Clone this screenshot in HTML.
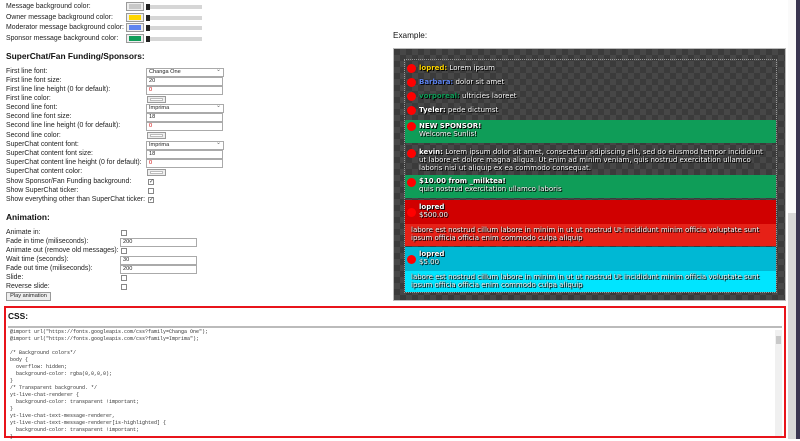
<!DOCTYPE html>
<html><head><style>
*{margin:0;padding:0;box-sizing:border-box}
body{width:800px;height:439px;overflow:hidden;background:#fff;font-family:"Liberation Sans",Arial,sans-serif;font-size:6.9px;color:#222;position:relative}
.a{position:absolute;white-space:nowrap}
.h{font-weight:bold;font-size:8.4px;color:#111}
.sw{position:absolute;width:18px;height:9px;border:1px solid #999;background:#eee;padding:1px 2px}
.sw i{display:block;width:100%;height:100%}
.sl{position:absolute;width:56px;height:4px;background:#d6d6d6}
.sl b{position:absolute;left:0;top:-1px;width:4px;height:6px;background:#222}
.sel,.txt{position:absolute;height:8.5px;border:1px solid #aaa;background:#fff;font-size:5.6px;padding-left:2px;line-height:7px}
.sel{width:78px}
.sel:after{content:"⌄";position:absolute;right:2px;top:-2px;font-size:6px;color:#666}
.txt{width:77px}
.col{position:absolute;width:19px;height:7px;border:1px solid #999;background:#eee;padding:1px 2px}
.col i{display:block;width:100%;height:100%;background:#fff;border:1px solid #bbb}
.cb{position:absolute;width:6px;height:6px;border:1px solid #888;background:#fff;font-size:6px;line-height:5px;text-align:center;color:#444}
.ex{position:absolute;left:393px;top:48px;width:393px;height:253px;background-color:#3b3b3b;background-image:linear-gradient(45deg,#474747 25%,transparent 25%,transparent 75%,#474747 75%),linear-gradient(45deg,#474747 25%,transparent 25%,transparent 75%,#474747 75%);background-size:12px 12px;background-position:0 0,6px 6px;border:1px solid #bbb}
.in{position:absolute;left:10px;top:10px;width:373px;height:234px;border:1px dotted #999}
.m{position:absolute;left:0;right:0;font-family:"DejaVu Sans",sans-serif;font-size:7px;color:#fff;text-shadow:0 0 1px #000,1px 1px 0 #000}
.dot{position:absolute;left:2px;width:9px;height:9px;border-radius:50%;background:#f00}
.m .t{position:absolute;left:14px}
.n{font-weight:bold}
.css{position:absolute;left:4px;top:306px;width:782px;height:132px;border:2px solid #e8141b}
.code{position:absolute;left:2px;top:18px;right:2px;bottom:0;border-top:2px solid #bbb;font-family:"Liberation Mono",monospace;font-size:5px;line-height:7px;padding:1px 2px;white-space:pre;color:#333}
.sb{position:absolute;right:0;top:2px;width:7px;bottom:0;background:#f0f0f0}
</style></head><body>
<div class="a" style="left:6px;top:3px">Message background color:</div>
<div class="a" style="left:6px;top:14px">Owner message background color:</div>
<div class="a" style="left:6px;top:24px">Moderator message background color:</div>
<div class="a" style="left:6px;top:35px">Sponsor message background color:</div>
<div class="sw" style="left:126px;top:2px"><i style="background:#c8c8c8"></i></div>
<div class="sw" style="left:126px;top:13px"><i style="background:#ffd600"></i></div>
<div class="sw" style="left:126px;top:23px"><i style="background:#5e84f1"></i></div>
<div class="sw" style="left:126px;top:34px"><i style="background:#0f9d58"></i></div>
<div class="sl" style="left:146px;top:5px"><b></b></div>
<div class="sl" style="left:146px;top:16px"><b></b></div>
<div class="sl" style="left:146px;top:26px"><b></b></div>
<div class="sl" style="left:146px;top:37px"><b></b></div>

<div class="a h" style="left:6px;top:51px">SuperChat/Fan Funding/Sponsors:</div>
<div class="a" style="left:6px;top:68px">First line font:</div>
<div class="a" style="left:6px;top:77px">First line font size:</div>
<div class="a" style="left:6px;top:86px">First line line height (0 for default):</div>
<div class="a" style="left:6px;top:95px">First line color:</div>
<div class="a" style="left:6px;top:104px">Second line font:</div>
<div class="a" style="left:6px;top:113px">Second line font size:</div>
<div class="a" style="left:6px;top:122px">Second line line height (0 for default):</div>
<div class="a" style="left:6px;top:132px">Second line color:</div>
<div class="a" style="left:6px;top:141px">SuperChat content font:</div>
<div class="a" style="left:6px;top:150px">SuperChat content font size:</div>
<div class="a" style="left:6px;top:159px">SuperChat content line height (0 for default):</div>
<div class="a" style="left:6px;top:168px">SuperChat content color:</div>
<div class="a" style="left:6px;top:178px">Show Sponsor/Fan Funding background:</div>
<div class="a" style="left:6px;top:187px">Show SuperChat ticker:</div>
<div class="a" style="left:6px;top:196px">Show everything other than SuperChat ticker:</div>
<div class="sel" style="left:146px;top:68px">Changa One</div>
<div class="txt" style="left:146px;top:77px">20</div>
<div class="txt" style="left:146px;top:86px;color:#c00">0</div>
<div class="col" style="left:147px;top:96px"><i></i></div>
<div class="sel" style="left:146px;top:104px">Imprima</div>
<div class="txt" style="left:146px;top:113px">18</div>
<div class="txt" style="left:146px;top:122px;color:#c00">0</div>
<div class="col" style="left:147px;top:132px"><i></i></div>
<div class="sel" style="left:146px;top:141px">Imprima</div>
<div class="txt" style="left:146px;top:150px">18</div>
<div class="txt" style="left:146px;top:159px;color:#c00">0</div>
<div class="col" style="left:147px;top:169px"><i></i></div>
<div class="cb" style="left:148px;top:179px">✓</div>
<div class="cb" style="left:148px;top:188px"></div>
<div class="cb" style="left:148px;top:197px">✓</div>

<div class="a h" style="left:6px;top:212px">Animation:</div>
<div class="a" style="left:6px;top:229px">Animate in:</div>
<div class="a" style="left:6px;top:238px">Fade in time (miliseconds):</div>
<div class="a" style="left:6px;top:247px">Animate out (remove old messages):</div>
<div class="a" style="left:6px;top:256px">Wait time (seconds):</div>
<div class="a" style="left:6px;top:265px">Fade out time (miliseconds):</div>
<div class="a" style="left:6px;top:274px">Slide:</div>
<div class="a" style="left:6px;top:283px">Reverse slide:</div>
<div class="cb" style="left:121px;top:230px"></div>
<div class="txt" style="left:120px;top:238px">200</div>
<div class="cb" style="left:121px;top:248px"></div>
<div class="txt" style="left:120px;top:256px">30</div>
<div class="txt" style="left:120px;top:265px">200</div>
<div class="cb" style="left:121px;top:275px"></div>
<div class="cb" style="left:121px;top:284px"></div>
<div class="a" style="left:6px;top:292px;height:9px;width:45px;border:1px solid #999;background:#eee;font-size:5.6px;line-height:7px;text-align:center">Play animation</div>

<div class="a" style="left:393px;top:31px;font-size:8.2px;color:#111">Example:</div>
<div class="ex"><div class="in">
 <div class="m" style="top:4px"><span class="dot"></span><span class="t"><b class="n" style="color:#ffd600">lopred:</b> Lorem ipsum</span></div>
 <div class="m" style="top:18px"><span class="dot"></span><span class="t"><b class="n" style="color:#5e84f1">Barbara:</b> dolor sit amet</span></div>
 <div class="m" style="top:32px"><span class="dot"></span><span class="t"><b class="n" style="color:#0f9d58">vorporeal:</b> ultricies laoreet</span></div>
 <div class="m" style="top:46px"><span class="dot"></span><span class="t"><b class="n">Tyeler:</b> pede dictumst</span></div>
 <div class="m" style="top:60px;height:23px;background:#0f9d58;border-radius:1px"><span class="dot" style="top:2px"></span><span class="t" style="top:2px;line-height:8px"><b class="n">NEW SPONSOR!</b><br>Welcome Sunlis!</span></div>
 <div class="m" style="top:87px;height:30px"><span class="dot" style="top:2px"></span><span class="t" style="top:1px;line-height:8px;white-space:normal;right:4px"><b class="n">kevin:</b> Lorem ipsum dolor sit amet, consectetur adipiscing elit, sed do eiusmod tempor incididunt ut labore et dolore magna aliqua. Ut enim ad minim veniam, quis nostrud exercitation ullamco laboris nisi ut aliquip ex ea commodo consequat.</span></div>
 <div class="m" style="top:115px;height:23px;background:#0f9d58"><span class="dot" style="top:3px"></span><span class="t" style="top:2px;line-height:8px"><b class="n">$10.00 from _milktea!</b><br>quis nostrud exercitation ullamco laboris</span></div>
 <div class="m" style="top:140px;height:24px;background:#d00000"><span class="dot" style="top:8px"></span><span class="t" style="top:3px;line-height:8px"><b class="n">lopred</b><br>$500.00</span></div>
 <div class="m" style="top:164px;height:22px;background:#e62117"><span class="t" style="left:6px;right:4px;top:2px;line-height:8px;white-space:normal">labore est nostrud cillum labore in minim in ut ut nostrud Ut incididunt minim officia voluptate sunt ipsum officia officia enim commodo culpa aliquip</span></div>
 <div class="m" style="top:187px;height:24px;background:#00b8d4"><span class="dot" style="top:8px"></span><span class="t" style="top:3px;line-height:8px"><b class="n">lopred</b><br>$5.00</span></div>
 <div class="m" style="top:211px;height:21px;background:#00e5ff"><span class="t" style="left:6px;right:4px;top:2px;line-height:8px;white-space:normal">labore est nostrud cillum labore in minim in ut ut nostrud Ut incididunt minim officia voluptate sunt ipsum officia officia enim commodo culpa aliquip</span></div>
</div></div>

<div class="css">
 <div class="a h" style="left:2px;top:3px;font-size:8.4px">CSS:</div>
 <div class="code">@import url("https://fonts.googleapis.com/css?family=Changa One");
@import url("https://fonts.googleapis.com/css?family=Imprima");

/* Background colors*/
body {
  overflow: hidden;
  background-color: rgba(0,0,0,0);
}
/* Transparent background. */
yt-live-chat-renderer {
  background-color: transparent !important;
}
yt-live-chat-text-message-renderer,
yt-live-chat-text-message-renderer[is-highlighted] {
  background-color: transparent !important;
}<div class="sb"><div style="position:absolute;top:6px;left:1px;width:5px;height:8px;background:#c8c8c8"></div></div></div>
</div>

<div class="a" style="left:788px;top:0;width:8px;height:439px;background:#d8d8d8"><div style="width:8px;height:213px;background:#fafafa"></div></div>
<div class="a" style="left:796px;top:0;width:4px;height:439px;background:#3a3550"></div>
</body></html>
